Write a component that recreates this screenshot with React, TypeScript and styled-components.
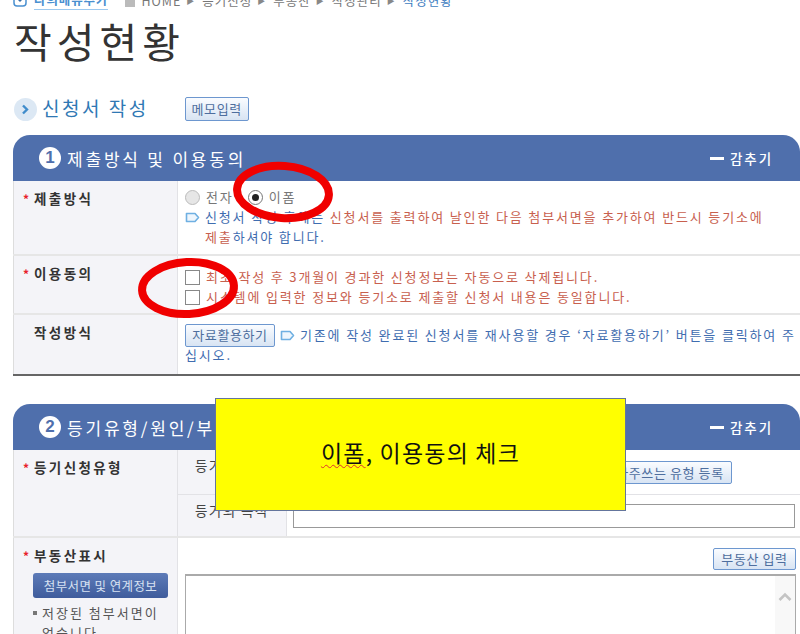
import React, {FC} from 'react';
import styled, {createGlobalStyle} from "styled-components";

const GlobalStyle = createGlobalStyle`
  html, body {
    margin: 0;
    padding: 0;
    background: #fff;
  }
  body {
    font-family: "Noto Sans CJK KR", "Noto Sans", sans-serif;
    color: #333;
  }
`

const Page = styled.div`
  position: relative;
  width: 800px;
  height: 634px;
  overflow: hidden;
`

const Crumbs = styled.div`
  display: flex;
  align-items: center;
  height: 14px;
  margin-top: -7px;
  padding-left: 13px;
  font-size: 12.5px;
  color: #777;
  white-space: nowrap;
`

const MyMenu = styled.a`
  margin: 0 14px 0 7px;
  font-weight: 700;
  font-size: 12.5px;
  letter-spacing: 0.9px;
  color: #4a90d0;
  border-bottom: 1px solid #9cc8ee;
`

const CrumbText = styled.span<{current?: boolean}>`
  margin-left: 3px;
  color: ${props => props.current ? "#3d7cc0" : "#777"};
  letter-spacing: 1px;
`

const CrumbSep = styled.span`
  margin: 0 5px;
  font-size: 8px;
  color: #888;
`

const Title = styled.h1`
  margin: 8px 0 0 14px;
  font-size: 41px;
  line-height: 50px;
  font-weight: 400;
  letter-spacing: 5px;
  color: #333;
`

const SubHead = styled.div`
  display: flex;
  align-items: center;
  height: 26px;
  margin: 31px 0 13px 14px;
`

const SubIcon = styled.span`
  display: flex;
  align-items: center;
  justify-content: center;
  width: 23px;
  height: 23px;
  margin-right: 5px;
  border-radius: 50%;
  background: #dce8f4;
`

const SubTitle = styled.h2`
  margin: -3px 36px 0 0;
  font-size: 19px;
  line-height: 24px;
  font-weight: 400;
  letter-spacing: 2.5px;
  color: #2f78b4;
`

const LightButton = styled.button<{w?: number, h?: number}>`
  flex: none;
  width: ${props => props.w ?? 64}px;
  height: ${props => props.h ?? 24}px;
  padding: 0;
  border: 1px solid #6d97cf;
  border-radius: 2px;
  background: linear-gradient(#fafcff, #d8e4f3);
  font-family: inherit;
  font-size: 13px;
  letter-spacing: 0.6px;
  line-height: 20px;
  color: #4e6e9e;
  white-space: nowrap;
`

const Panel = styled.section<{gap?: number}>`
  width: 787px;
  margin: ${props => props.gap ?? 0}px 0 0 13px;
`

const PanelHead = styled.header`
  display: flex;
  align-items: center;
  height: 46px;
  padding: 0 27px 0 26px;
  border-radius: 17px 17px 0 0;
  background: #4f6fac;
  color: #fff;
`

const Num = styled.span`
  display: flex;
  align-items: center;
  justify-content: center;
  width: 22px;
  height: 22px;
  margin-right: 6px;
  border-radius: 50%;
  background: #fff;
  color: #4f6fac;
  font-size: 17px;
  font-weight: 700;
  font-family: "Liberation Sans", sans-serif;
`

const PanelTitle = styled.h3`
  flex: 1;
  margin: 0;
  font-size: 17px;
  font-weight: 400;
  letter-spacing: 2.8px;
  white-space: nowrap;
`

const Dash = styled.span`
  width: 14px;
  height: 3px;
  margin-right: 6px;
  background: #fff;
`

const Toggle = styled.span`
  font-size: 13.5px;
  font-weight: 500;
  letter-spacing: 1.9px;
`

const Row = styled.div<{h: number, last?: boolean}>`
  display: grid;
  grid-template-columns: 165px 1fr;
  height: ${props => props.h}px;
  overflow: hidden;
  border-bottom: ${props => props.last ? "2px solid #666" : "2px solid #e6e6e6"};
`

const Head = styled.div`
  padding: 7px 0 0 9px;
  background: #f4f4f8;
  border-left: 1px solid #ddd;
  border-right: 1px solid #e2e2e6;
`

const Label = styled.div`
  display: flex;
  align-items: center;
  height: 20px;
  font-size: 13.5px;
  font-weight: 700;
  letter-spacing: 2.4px;
  color: #333;
  white-space: nowrap;
`

const Star = styled.span<{$ghost?: boolean}>`
  width: 11px;
  flex: none;
  font-size: 12px;
  letter-spacing: 0;
  color: #e8202a;
  visibility: ${props => props.$ghost ? "hidden" : "visible"};
`

const Cell = styled.div<{top?: number}>`
  padding: ${props => props.top ?? 6}px 0 0 7px;
  font-size: 13px;
  line-height: 20px;
  letter-spacing: 1.85px;
  white-space: nowrap;
`

const Line = styled.div`
  display: flex;
  align-items: center;
  height: 20px;
`

const Indented = styled.div`
  padding-left: 20px;
  color: #3f6db0;
`

const Blue = styled.span`
  color: #3f6db0;
`

const Red = styled.span`
  color: #c8604e;
`

const Radio = styled.span<{checked?: boolean}>`
  display: flex;
  align-items: center;
  justify-content: center;
  box-sizing: border-box;
  width: 15px;
  height: 15px;
  margin-right: 6px;
  border: 1px solid ${props => props.checked ? "#777" : "#bbb"};
  border-radius: 50%;
  background: ${props => props.checked ? "#fff" : "#e6e6e6"};
  &::after {
    content: "";
    display: ${props => props.checked ? "block" : "none"};
    width: 7px;
    height: 7px;
    border-radius: 50%;
    background: #222;
  }
`

const RadioLabel = styled.span`
  margin-right: 14px;
  color: #777;
`

const Check = styled.span`
  box-sizing: border-box;
  flex: none;
  width: 15px;
  height: 15px;
  margin-right: 6px;
  border: 1px solid #888;
  background: #fff;
`

const TagIcon: FC<{mr?: number}> = ({mr = 5}) => (
    <svg width="15" height="11" viewBox="0 0 15 11" style={{flex: "none", marginRight: mr}}>
        <path d="M1.5 1.5h8.5l3.5 4-3.5 4H1.5z" fill="#eef6fd" stroke="#6fb0e2" strokeWidth="1.6" strokeLinejoin="round"/>
    </svg>
)

const ButtonGap = styled.span`
  width: 5px;
  flex: none;
`

const SubGrid = styled.div`
  display: grid;
  grid-template-rows: 45px 41px;
`

const SubRow = styled.div<{bordered?: boolean}>`
  display: grid;
  grid-template-columns: 109px 1fr;
  border-bottom: ${props => props.bordered ? "1px solid #e2e2e6" : "none"};
`

const SubLabel = styled.div`
  padding: 3px 0 0 17px;
  background: #f4f4f8;
  border-right: 1px solid #e2e2e6;
  font-size: 13.5px;
  line-height: 24px;
  letter-spacing: 1.4px;
  color: #444;
  white-space: nowrap;
`

const ButtonCell = styled.div`
  display: flex;
  justify-content: flex-end;
  padding: 11px 68px 0 0;
`

const InputCell = styled.div`
  padding: 9px 5px 0 6px;
`

const TextInput = styled.div`
  box-sizing: border-box;
  height: 24px;
  border: 1px solid #999;
`

const RealEstate = styled.div`
  padding: 10px 4px 0 7px;
`

const RightAlign = styled.div`
  display: flex;
  justify-content: flex-end;
  margin-bottom: 4px;
`

const ListBox = styled.div`
  display: flex;
  justify-content: flex-end;
  box-sizing: border-box;
  height: 90px;
  border: 1px solid #aaa;
  border-top-width: 2px;
`

const ScrollBar = styled.div`
  display: flex;
  justify-content: center;
  width: 20px;
  padding-top: 16px;
  background: #f8f8f8;
`

const AttachButton = styled.button`
  display: block;
  width: 135px;
  height: 25px;
  margin: 8px 0 5px 10px;
  padding: 0;
  border: 0;
  border-radius: 3px;
  background: linear-gradient(#5d7bb8, #3f5c9c);
  font-family: inherit;
  font-size: 12.5px;
  letter-spacing: 0.4px;
  color: #d8e2f2;
  white-space: nowrap;
`

const Note = styled.div`
  padding-left: 19px;
  font-size: 13px;
  line-height: 20px;
  letter-spacing: 2px;
  color: #555;
  white-space: nowrap;
`

const Bullet = styled.span`
  display: inline-block;
  width: 4px;
  height: 4px;
  margin: 0 5px 3px -9px;
  background: #777;
`

const Circle = styled.svg<{x: number, y: number}>`
  position: absolute;
  left: ${props => props.x}px;
  top: ${props => props.y}px;
  pointer-events: none;
`

const Callout = styled.div`
  position: absolute;
  left: 215px;
  top: 398px;
  box-sizing: border-box;
  display: flex;
  align-items: center;
  justify-content: center;
  width: 411px;
  height: 113px;
  padding: 0 0 6px 0;
  border: 1px solid #64759c;
  background: #ff0;
  font-size: 23px;
  letter-spacing: 1.2px;
  color: #111;
`

const Typo = styled.span`
  text-decoration: underline wavy #e03030 1px;
  text-underline-offset: 2px;
`

const Sep = () => <CrumbSep>▶</CrumbSep>

const App: FC = () => (
    <Page>
        <GlobalStyle/>
        <Crumbs>
            <svg width="14" height="14" viewBox="0 0 14 14">
                <rect x="1" y="1" width="12" height="12" rx="3" fill="#fff" stroke="#4a90d0" strokeWidth="1.5"/>
                <path d="M4 6l3 3 3-3z" fill="#3a70a8"/>
            </svg>
            <MyMenu>나의메뉴추가</MyMenu>
            <svg width="16" height="14" viewBox="0 0 16 14">
                <path d="M8 1L1 7h2v7h10V7h2z" fill="#bbb"/>
            </svg>
            <CrumbText>HOME</CrumbText>
            <Sep/>
            <CrumbText>등기신청</CrumbText>
            <Sep/>
            <CrumbText>부동산</CrumbText>
            <Sep/>
            <CrumbText>작성관리</CrumbText>
            <Sep/>
            <CrumbText current>작성현황</CrumbText>
        </Crumbs>
        <Title>작성현황</Title>
        <SubHead>
            <SubIcon>
                <svg width="9" height="11" viewBox="0 0 9 11">
                    <path d="M2 1.5l4 4-4 4" fill="none" stroke="#3f8ccb" strokeWidth="2.4"/>
                </svg>
            </SubIcon>
            <SubTitle>신청서 작성</SubTitle>
            <LightButton>메모입력</LightButton>
        </SubHead>

        <Panel>
            <PanelHead>
                <Num>1</Num>
                <PanelTitle>제출방식 및 이용동의</PanelTitle>
                <Dash/>
                <Toggle>감추기</Toggle>
            </PanelHead>
            <Row h={73}>
                <Head><Label><Star>*</Star>제출방식</Label></Head>
                <Cell>
                    <Line>
                        <Radio/><RadioLabel>전자</RadioLabel>
                        <Radio checked/><RadioLabel>이폼</RadioLabel>
                    </Line>
                    <Line>
                        <TagIcon/>
                        <Blue>신청서 작성 후에는&nbsp;</Blue>
                        <Red>신청서를 출력하여 날인한 다음 첨부서면을 추가하여 반드시 등기소에</Red>
                    </Line>
                    <Indented><Red>제출</Red>하셔야 합니다.</Indented>
                </Cell>
            </Row>
            <Row h={57}>
                <Head><Label><Star>*</Star>이용동의</Label></Head>
                <Cell top={11}>
                    <Line><Check/><Red>최초 작성 후 3개월이 경과한 신청정보는 자동으로 삭제됩니다.</Red></Line>
                    <Line><Check/><Red>시스템에 입력한 정보와 등기소로 제출할 신청서 내용은 동일합니다.</Red></Line>
                </Cell>
            </Row>
            <Row h={59} last>
                <Head><Label><Star $ghost>*</Star>작성방식</Label></Head>
                <Cell top={10}>
                    <Line>
                        <LightButton w={90} h={23}>자료활용하기</LightButton>
                        <ButtonGap/>
                        <TagIcon/>
                        <Blue>기존에 작성 완료된 신청서를 재사용할 경우 ‘자료활용하기’ 버튼을 클릭하여 주</Blue>
                    </Line>
                    <Blue>십시오.</Blue>
                </Cell>
            </Row>
        </Panel>

        <Panel gap={28}>
            <PanelHead>
                <Num>2</Num>
                <PanelTitle>등기유형/원인/부동산</PanelTitle>
                <Dash/>
                <Toggle>감추기</Toggle>
            </PanelHead>
            <Row h={86}>
                <Head><Label><Star>*</Star>등기신청유형</Label></Head>
                <SubGrid>
                    <SubRow bordered>
                        <SubLabel>등기유형</SubLabel>
                        <ButtonCell><LightButton w={124} h={23}>자주쓰는 유형 등록</LightButton></ButtonCell>
                    </SubRow>
                    <SubRow>
                        <SubLabel>등기의 목적</SubLabel>
                        <InputCell><TextInput/></InputCell>
                    </SubRow>
                </SubGrid>
            </Row>
            <Row h={120}>
                <Head>
                    <Label><Star>*</Star>부동산표시</Label>
                    <AttachButton>첨부서면 및 연계정보</AttachButton>
                    <Note><Bullet/>저장된 첨부서면이<br/>없습니다</Note>
                </Head>
                <RealEstate>
                    <RightAlign><LightButton w={83} h={22}>부동산 입력</LightButton></RightAlign>
                    <ListBox>
                        <ScrollBar>
                            <svg width="14" height="10" viewBox="0 0 14 10">
                                <path d="M1.5 8L7 2.5 12.5 8" fill="none" stroke="#c4c4c4" strokeWidth="2.6"/>
                            </svg>
                        </ScrollBar>
                    </ListBox>
                </RealEstate>
            </Row>
        </Panel>

        <Circle x={229} y={158} width="108" height="68" viewBox="0 0 108 68">
            <ellipse cx="54" cy="34" rx="46" ry="26" transform="rotate(4 54 34)" fill="none" stroke="#f00000" strokeWidth="8"/>
        </Circle>
        <Circle x={134} y={254} width="108" height="68" viewBox="0 0 108 68">
            <ellipse cx="54" cy="34" rx="46" ry="26" transform="rotate(-3 54 34)" fill="none" stroke="#f00000" strokeWidth="8"/>
        </Circle>
        <Callout><span><Typo>이폼</Typo>, 이용동의 체크</span></Callout>
    </Page>
);

export default App;
